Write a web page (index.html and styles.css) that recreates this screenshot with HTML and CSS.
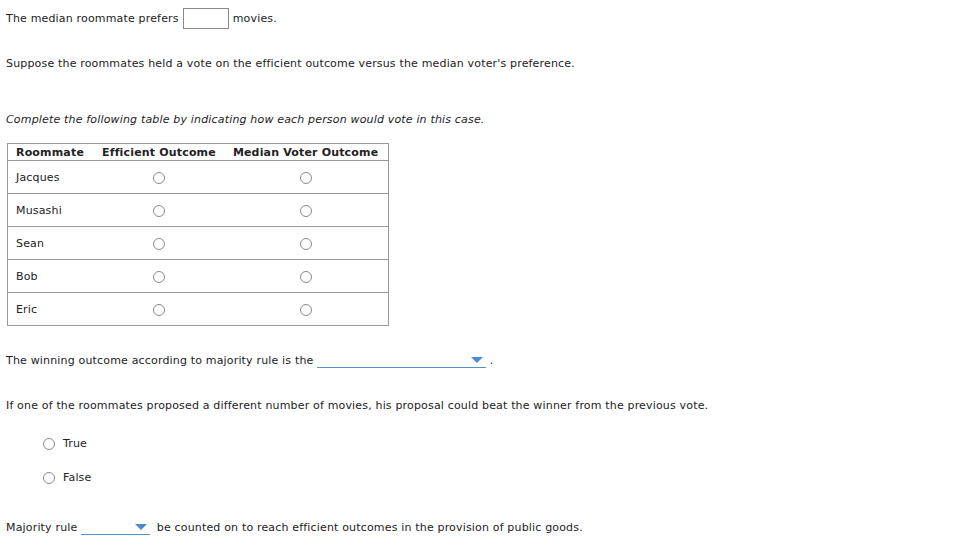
FILE: index.html
```html
<!DOCTYPE html>
<html lang="en">
<head>
    <meta charset="UTF-8">
    <title>Majority Rule</title>
    <link rel="stylesheet" href="styles.css">
</head>
<body>
    <div class="line first">
        The median roommate prefers <span class="blank"></span> movies.
    </div>

    <div class="line suppose">Suppose the roommates held a vote on the efficient outcome versus the median voter's preference.</div>

    <div class="line note">Complete the following table by indicating how each person would vote in this case.</div>

    <table class="votes">
        <tr class="head">
            <th class="name">Roommate</th>
            <th>Efficient Outcome</th>
            <th class="last">Median Voter Outcome</th>
        </tr>
        <tr>
            <td class="name">Jacques</td>
            <td><span class="radio"></span></td>
            <td class="last"><span class="radio"></span></td>
        </tr>
        <tr>
            <td class="name">Musashi</td>
            <td><span class="radio"></span></td>
            <td class="last"><span class="radio"></span></td>
        </tr>
        <tr>
            <td class="name">Sean</td>
            <td><span class="radio"></span></td>
            <td class="last"><span class="radio"></span></td>
        </tr>
        <tr>
            <td class="name">Bob</td>
            <td><span class="radio"></span></td>
            <td class="last"><span class="radio"></span></td>
        </tr>
        <tr>
            <td class="name">Eric</td>
            <td><span class="radio"></span></td>
            <td class="last"><span class="radio"></span></td>
        </tr>
    </table>

    <div class="line winning">
        The winning outcome according to majority rule is the <span class="select wide"><span class="arrow"></span></span> .
    </div>

    <div class="line proposal">If one of the roommates proposed a different number of movies, his proposal could beat the winner from the previous vote.</div>

    <div class="option true"><span class="radio"></span> True</div>
    <div class="option false"><span class="radio"></span> False</div>

    <div class="line majority">
        Majority rule <span class="select short"><span class="arrow"></span></span> be counted on to reach efficient outcomes in the provision of public goods.
    </div>
</body>
</html>
```

FILE: styles.css
```css
body {
    margin: 0;
    padding: 0 6px;
    font-family: Verdana, "DejaVu Sans", sans-serif;
    font-size: 11px;
    letter-spacing: 0.17px;
    color: #222;
}
.line {
    line-height: 14px;
    white-space: nowrap;
}
.first {
    display: flex;
    align-items: center;
    gap: 4px;
    padding-top: 8px;
}
.blank {
    display: inline-block;
    width: 44px;
    height: 19px;
    border: 1px solid #8a8a8a;
}
.suppose {
    margin-top: 28px;
}
.note {
    margin-top: 42px;
    font-style: italic;
}
.votes {
    margin-top: 16px;
    margin-left: 1px;
    border-collapse: collapse;
    border: 1px solid #999;
}
.votes th {
    font-weight: bold;
    height: 16px;
    padding: 0 8px;
    text-align: center;
    border-bottom: 1px solid #999;
}
.votes td {
    height: 32px;
    padding: 0 8px;
    text-align: center;
    border-bottom: 1px solid #999;
}
.votes .name {
    text-align: left;
    padding-right: 10px;
}
.votes .last {
    padding-left: 9px;
    padding-right: 10px;
}
.radio {
    display: inline-block;
    width: 10px;
    height: 10px;
    border: 1px solid #8a8a8a;
    border-radius: 50%;
    background: #fff;
    vertical-align: middle;
}
.winning {
    margin-top: 28px;
}
.select {
    display: inline-block;
    position: relative;
    height: 13px;
    border-bottom: 1px solid #5b8fc7;
    vertical-align: -4px;
}
.select.wide {
    width: 169px;
}
.select.short {
    width: 69px;
    margin-right: 3px;
}
.arrow {
    position: absolute;
    right: 3px;
    top: 3px;
    width: 0;
    height: 0;
    border-left: 6px solid transparent;
    border-right: 6px solid transparent;
    border-top: 6px solid #4a8ad0;
}
.proposal {
    margin-top: 31px;
}
.option {
    line-height: 14px;
    padding-left: 37px;
    display: flex;
    align-items: center;
    gap: 8px;
}
.option.true {
    margin-top: 24px;
}
.option.false {
    margin-top: 20px;
}
.majority {
    margin-top: 36px;
}
```
